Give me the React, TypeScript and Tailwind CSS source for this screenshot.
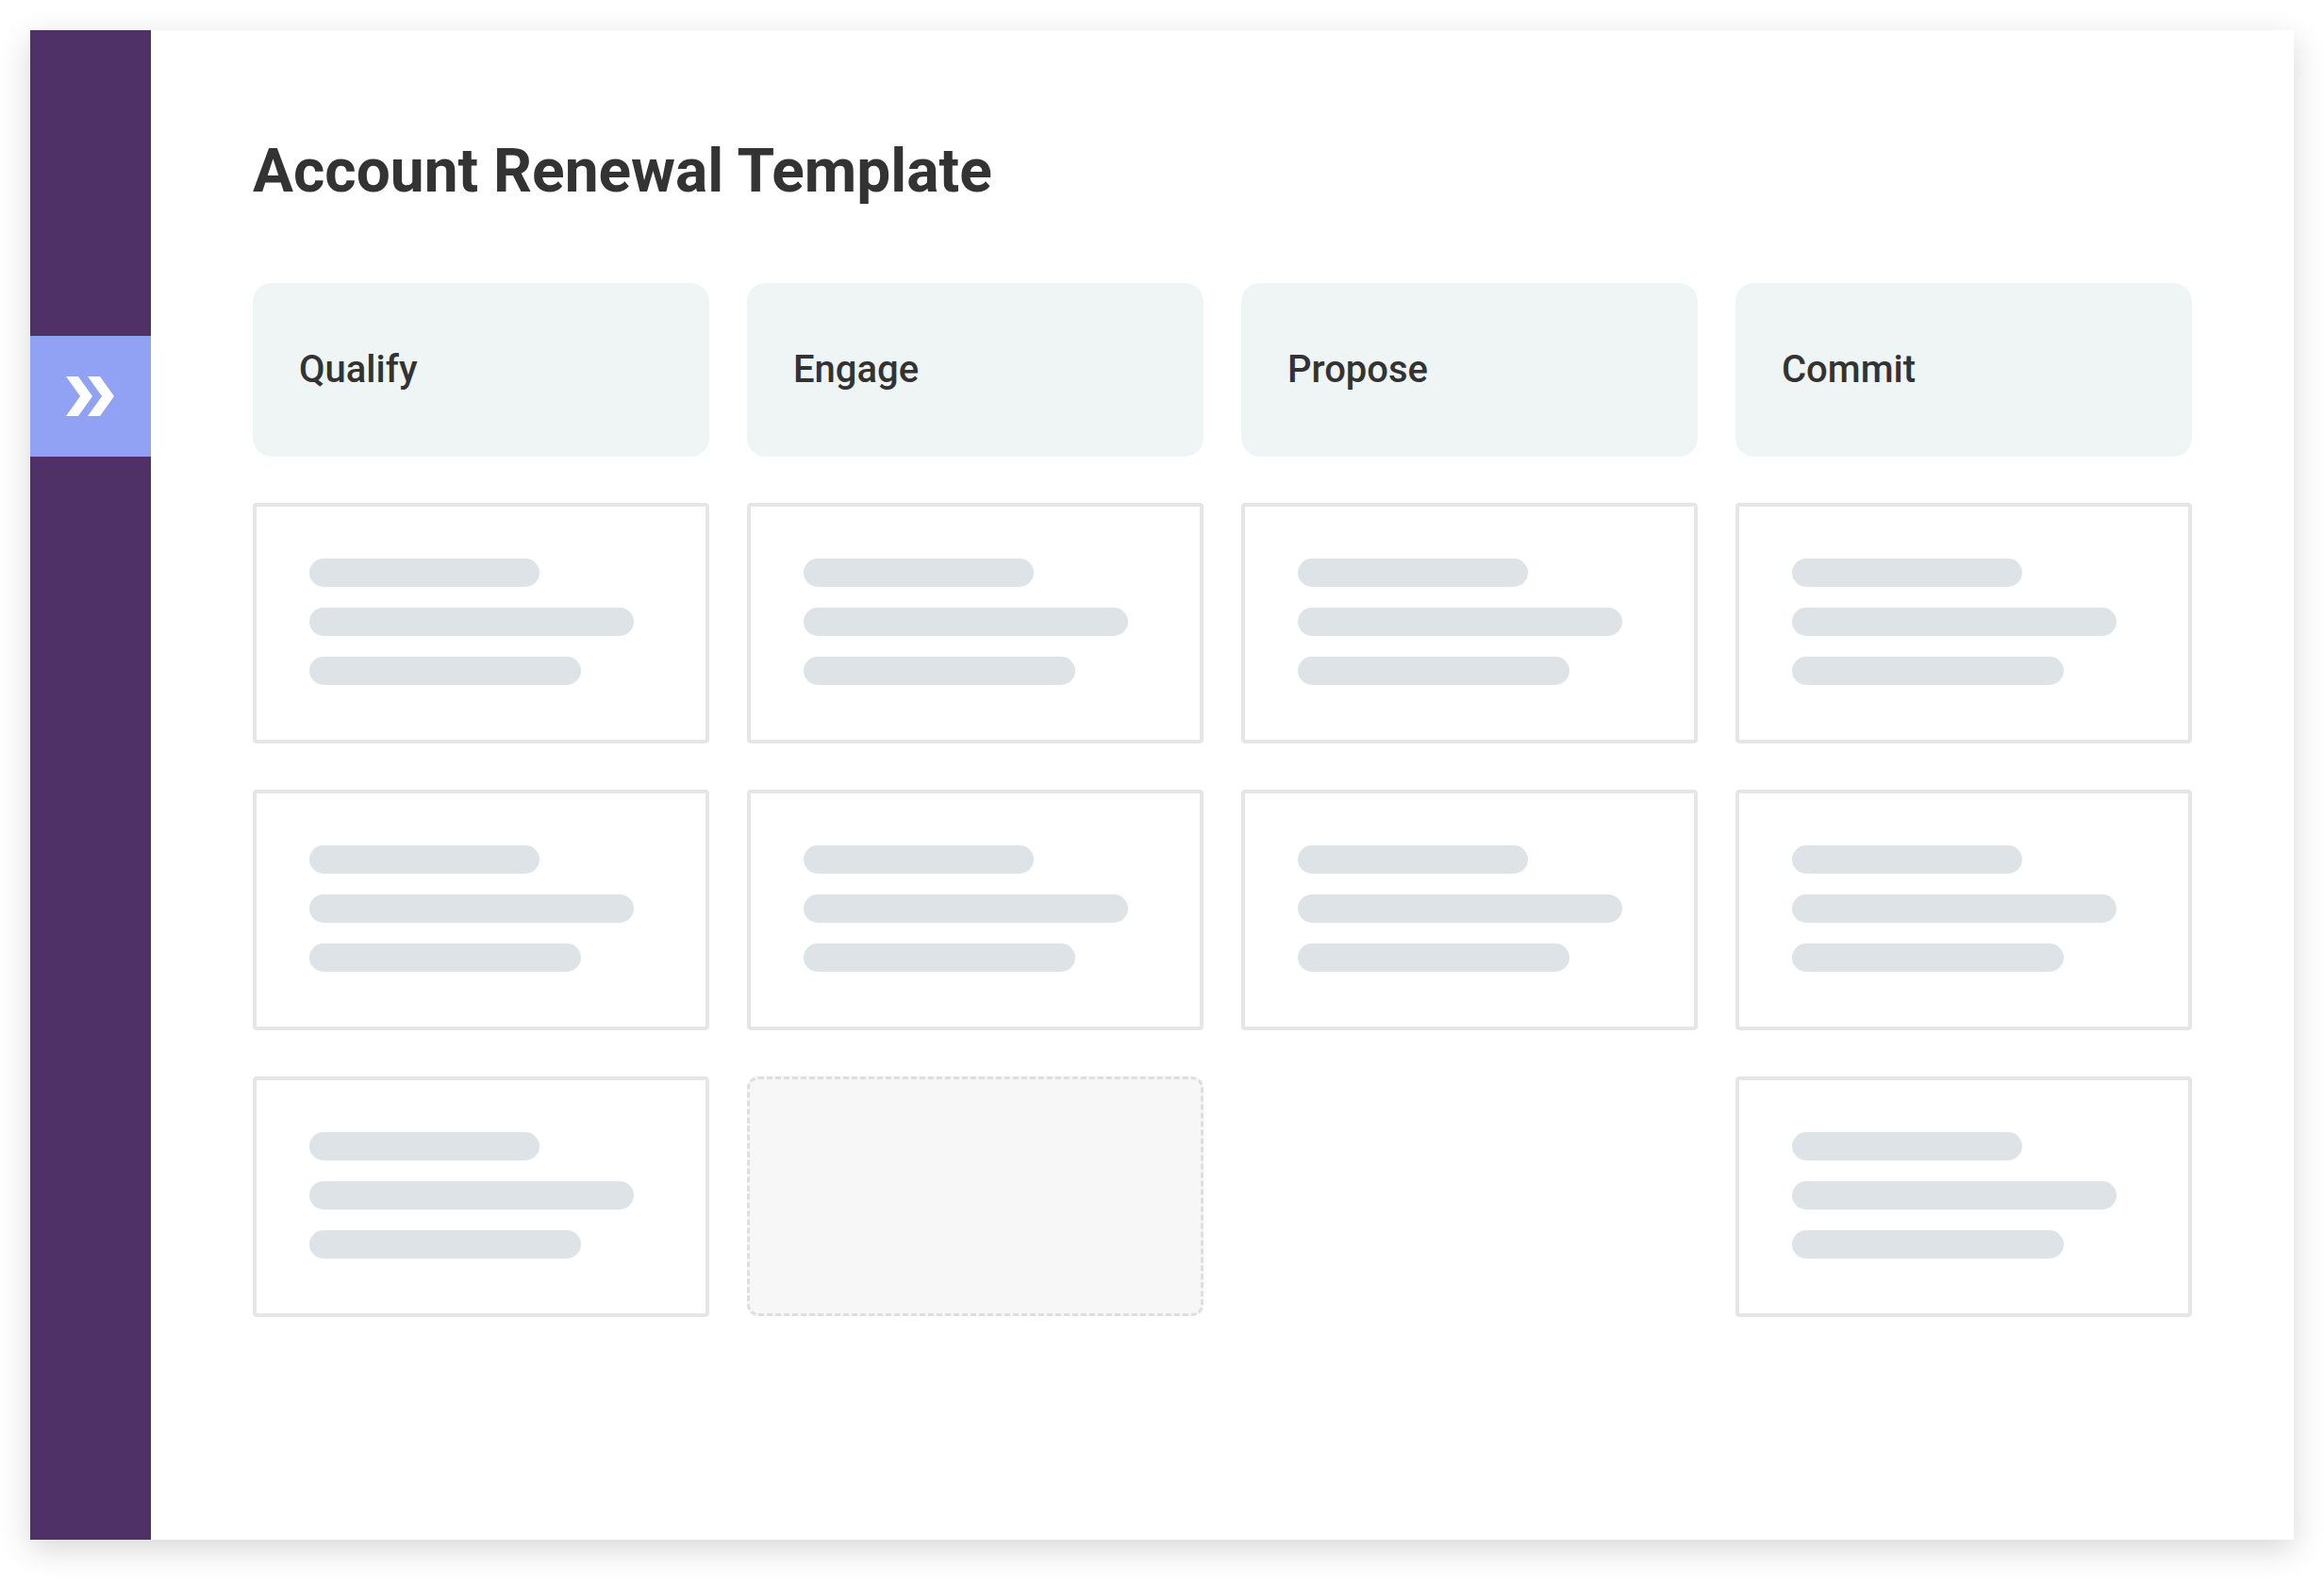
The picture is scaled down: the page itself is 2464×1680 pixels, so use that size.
import React from "react";

const columns = ["Qualify", "Engage", "Propose", "Commit"];

// rows: for each column, 3 slots: "card" | "dashed" | "empty"
const layout: Record<string, ("card" | "dashed" | "empty")[]> = {
  Qualify: ["card", "card", "card"],
  Engage: ["card", "card", "dashed"],
  Propose: ["card", "card", "empty"],
  Commit: ["card", "card", "card"],
};

function SkeletonCard() {
  return (
    <div className="h-[255px] rounded-[4px] border-4 border-[#e6e6e6] bg-white pl-[56px] pt-[55px] flex flex-col gap-[22px]">
      <div className="h-[30px] w-[244px] rounded-full bg-[#dde3e6]" />
      <div className="h-[30px] w-[344px] rounded-full bg-[#dde3e6]" />
      <div className="h-[30px] w-[288px] rounded-full bg-[#dde3e6]" />
    </div>
  );
}

function DashedCard() {
  return <div className="h-[254px] rounded-[12px] border-[3px] border-dashed border-[#dedede] bg-[#f7f7f7]" />;
}

function Chevrons() {
  return (
    <svg width="52" height="42" viewBox="0 0 52 42" fill="#ffffff">
      <polygon points="0,0 13,0 28,21 13,42 0,42 15,21" />
      <polygon points="23,0 36,0 51,21 36,42 23,42 38,21" />
    </svg>
  );
}

export default function App() {
  const rows = [0, 1, 2];
  return (
    <div
      className="w-full h-[1680px] bg-white p-[32px]"
      style={{ fontFamily: "Roboto, 'Noto Sans', Arial, sans-serif" }}
    >
      <div className="flex w-[2400px] h-[1600px] bg-white shadow-[0_10px_32px_rgba(0,0,0,0.16)]">
        <aside className="w-[128px] shrink-0 bg-[#4f3067] flex flex-col">
          <div className="h-[324px]" />
          <div className="h-[128px] bg-[#91a1f3] flex items-center justify-center">
            <Chevrons />
          </div>
        </aside>
        <main className="flex-1 px-[108px] pt-[118px]">
          <h1 className="text-[64px] leading-[64px] font-bold text-[#333333]">
            Account Renewal Template
          </h1>
          <div className="mt-[86px] grid grid-cols-4 gap-x-[40px] gap-y-[49px]">
            {columns.map((c) => (
              <div
                key={c}
                className="h-[184px] rounded-[20px] bg-[#eff5f5] flex items-center pl-[49px] text-[40px] font-medium text-[#333333]"
              >
                {c}
              </div>
            ))}
            {rows.map((r) =>
              columns.map((c) => {
                const kind = layout[c][r];
                if (kind === "card") return <SkeletonCard key={c + r} />;
                if (kind === "dashed") return <DashedCard key={c + r} />;
                return <div key={c + r} />;
              })
            )}
          </div>
        </main>
      </div>
    </div>
  );
}
